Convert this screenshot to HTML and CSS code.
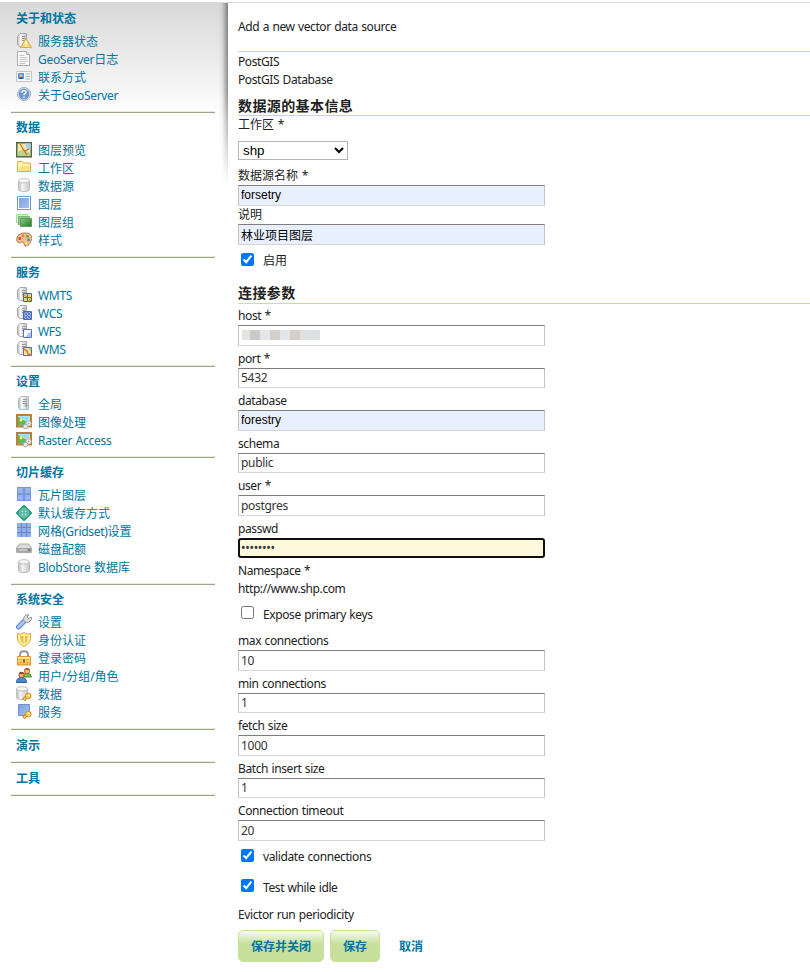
FILE: index.html
```html
<!DOCTYPE html>
<html lang="zh-CN">
<head>
  <meta charset="UTF-8" />
  <meta name="viewport" content="width=device-width, initial-scale=1.0"/>
  <title>GeoServer</title>
  <link rel="stylesheet" href="styles.css">
</head>
<body>
  <svg class="icon-defs" width="0" height="0">
    <defs>
      <linearGradient id="metal" x1="0" x2="1"><stop offset="0" stop-color="#bbb"/><stop offset=".35" stop-color="#f4f4f4"/><stop offset="1" stop-color="#c5c5c5"/></linearGradient>
      <linearGradient id="blue" x1="0" y1="0" x2="1" y2="1"><stop offset="0" stop-color="#7b9fdc"/><stop offset="1" stop-color="#a9c3ef"/></linearGradient>
      <linearGradient id="green" x1="0" y1="0" x2="1" y2="1"><stop offset="0" stop-color="#8cc98a"/><stop offset="1" stop-color="#237a27"/></linearGradient>
      <linearGradient id="gold" x1="0" y1="0" x2="0" y2="1"><stop offset="0" stop-color="#fff0a0"/><stop offset="1" stop-color="#f0b73c"/></linearGradient>
    </defs>
    <symbol id="server" viewBox="0 0 16 16">
      <path d="M1.500 3.500 4 .500h6.500v13H4L1.500 11.500z" fill="url(#metal)" stroke="#aaa"/>
      <path d="M4.500 1v12" stroke="#fff"/>
      <path d="M6 3.500h3.500M6 5.500h3.500M6 7.500h3.500" stroke="#999"/>
    </symbol>
    <symbol id="cylinder" viewBox="0 0 16 16">
      <path d="M2.500 3v8.500c0 1.200 2.200 2 5.500 2s5.500-.8 5.500-2V3" fill="url(#metal)" stroke="#bdbdbd"/>
      <ellipse cx="8" cy="2.800" rx="5.500" ry="2.200" fill="#f6f6f6" stroke="#c4c4c4"/>
    </symbol>
    <symbol id="key" viewBox="0 0 16 16">
      <path d="M12 9.500 7.500 14" stroke="#c8811c" stroke-width="3.400"/>
      <path d="M12 9.500 8 13.500" stroke="#ffd96b" stroke-width="1.600"/>
      <circle cx="12.300" cy="10" r="2.800" fill="#ffd35e" stroke="#cf8a22"/>
      <circle cx="13" cy="9.500" r=".8" fill="#fff"/>
    </symbol>
    <symbol id="picture" viewBox="0 0 16 16">
      <path d="M1 1h14v11.500H1z" fill="#a9e3f5" stroke="#b98038" stroke-width="2"/>
      <path d="m2 3 9 5v3.500H2z" fill="#5dbb52"/>
      <path d="M4 3h8v4z" fill="#8fdcf0"/>
      <circle cx="5" cy="6" r="1.400" fill="#fff07a"/>
      <circle cx="12.500" cy="9.500" r="2.600" fill="#eee" stroke="#bbb"/>
      <circle cx="9.500" cy="12.500" r="2.300" fill="#e8e8e8" stroke="#aaa"/>
      <circle cx="12.500" cy="9.500" r=".8" fill="#999"/>
    </symbol>
  </svg>

  <div class="page">
    <div class="sidebar">
      <div class="nav-block">
        <h3>关于和状态</h3>
        <ul>
          <li><svg class="icon" viewBox="0 0 16 16"><use href="#server"/><path d="M10 5.500 15.500 14.500h-11z" fill="#ffd978" stroke="#dfa545" stroke-linejoin="round"/><path d="M10 8v3.200M10 12.300v1.200" stroke="#fff" stroke-width="1.600"/></svg><a href="#">服务器状态</a></li>
          <li><svg class="icon" viewBox="0 0 16 16"><path d="M1.500.5h9l3 3v11h-12z" fill="#fbfbfb" stroke="#aaa"/><path d="M10.500.5v3h3" fill="#ddd" stroke="#aaa"/><path d="M3.500 4.500h5M3.500 6.500h8M3.500 8.500h8M3.500 10.500h8M3.500 12.500h6" stroke="#c4c4c4"/></svg><a href="#" class="en">GeoServer<span>日志</span></a></li>
          <li><svg class="icon" viewBox="0 0 16 16"><path d="M.5 2.500h15v10H.5z" fill="#fafafa" stroke="#c5c5c5"/><path d="M2 4h6v6H2z" fill="#5a96dc"/><circle cx="5" cy="6.500" r="1.500" fill="#f1b176"/><path d="M3 10q2-4 4 0" fill="#25559d"/><path d="M9.500 5h4.500M9.500 7.500h4.500M9.500 10h4.500" stroke="#9bb0c8"/></svg><a href="#">联系方式</a></li>
          <li><svg class="icon" viewBox="0 0 16 16"><circle cx="8" cy="7" r="6.500" fill="#c9d7eb" stroke="#9cb1cc"/><circle cx="8" cy="7" r="5.200" fill="#6d96cc"/><path d="M6 5.700c0-3 4-2.700 4-.5 0 1.500-2 1.400-2 3M8 9.500V11" fill="none" stroke="#fff" stroke-width="1.400"/></svg><a href="#" class="en"><span>关于</span>GeoServer</a></li>
        </ul>
      </div>

      <div class="nav-block">
        <h3>数据</h3>
        <ul>
          <li><svg class="icon" viewBox="0 0 16 16"><path d="M.75.75h14.500v14H.75z" fill="#f1eea0" stroke="#556549" stroke-width="1.500"/><path d="M9 1.500h5.500V8L11 7z" fill="#a8cff2"/><path d="M2 10 7 7l7 4v3H2z" fill="#b7d985"/><path d="m4 2 7 11M9 9l4-2" stroke="#e16042" stroke-width="1.300"/></svg><a href="#">图层预览</a></li>
          <li><svg class="icon" viewBox="0 0 16 16"><path d="M1.500 11.500v-10h5l1 1.500h7v8.500z" fill="#fff2b0" stroke="#e2ae43"/><path d="M2.500 11 4 7.500 7 6h7v5z" fill="#ffe07d"/></svg><a href="#">工作区</a></li>
          <li><svg class="icon" viewBox="0 0 16 16"><use href="#cylinder"/></svg><a href="#">数据源</a></li>
          <li><svg class="icon" viewBox="0 0 16 16"><path d="M1.500.5h13v13h-13z" fill="#fff" stroke="#6f94d0"/><path d="M3 2h10v10H3z" fill="url(#blue)"/></svg><a href="#">图层</a></li>
          <li><svg class="icon" viewBox="0 0 16 16"><path d="M.5.500h11v8H.5z" fill="#d9eed7" stroke="#a9d4a6"/><path d="M2.500 2.500h11v8h-11z" fill="#8fc88d" stroke="#73b772"/><path d="M4.500 4.500h11v8h-11z" fill="url(#green)" stroke="#5a9d5b"/></svg><a href="#">图层组</a></li>
          <li><svg class="icon" viewBox="0 0 16 16"><path d="M1 9C-.5 3 5 .8 10 1c5 .2 7 4 5 8-1.500 4-4 5.500-6 5-2-.6.500-3-2-4-2-.8-4 3-6-1z" fill="#efc08c" stroke="#b87843"/><circle cx="3.700" cy="6.500" r="1.500" fill="#d94b36"/><circle cx="7" cy="4" r="1.400" fill="#e77b54"/><circle cx="11.500" cy="4.300" r="1.500" fill="#5bad52"/><circle cx="12.500" cy="8" r="1.400" fill="#368ccc"/><circle cx="10" cy="11" r="1.300" fill="#f5df5d"/></svg><a href="#">样式</a></li>
        </ul>
      </div>

      <div class="nav-block">
        <h3>服务</h3>
        <ul>
          <li><svg class="icon" viewBox="0 0 16 16"><use href="#server"/><path d="M7.500 6.500h8v8h-8z" fill="#f4d36c" stroke="#4e6396"/><path d="M11.500 7v7M8 10.500h7" stroke="#4e6396"/><path d="m8.500 8 2 2M13 12l2 2" stroke="#e45c39"/></svg><a href="#" class="en">WMTS</a></li>
          <li><svg class="icon" viewBox="0 0 16 16"><use href="#server"/><path d="M7.500 6.500h8v8h-8z" fill="#aac4ef" stroke="#5069b0"/><path d="m8 7 7 7M8 10.500l3.500 3.500M11.500 7l3.500 3.500M15 7l-7 7M11.500 7 8 10.500M15 10.500 11.500 14" stroke="#4665b5"/></svg><a href="#" class="en">WCS</a></li>
          <li><svg class="icon" viewBox="0 0 16 16"><use href="#server"/><path d="M7.500 6.500h8v8h-8z" fill="#fff" stroke="#5b72b0"/><path d="M8.500 14q3-1 3-3.500 2 0 3.500-2V14z" fill="#a8c7f3"/></svg><a href="#" class="en">WFS</a></li>
          <li><svg class="icon" viewBox="0 0 16 16"><use href="#server"/><path d="M7.500 6.500h8v8h-8z" fill="#f0e88b" stroke="#6b68a4"/><path d="M12 7h3v4z" fill="#a6d48a"/><path d="m8 8 3 2 1 3 3 1" fill="none" stroke="#e46b3e" stroke-width="1.500"/></svg><a href="#" class="en">WMS</a></li>
        </ul>
      </div>

      <div class="nav-block">
        <h3>设置</h3>
        <ul>
          <li><svg class="icon" viewBox="0 0 16 16"><path d="M2.500 3 5 .500h7.500v13H5L2.500 12z" fill="url(#metal)" stroke="#bbb"/><path d="M6 1v12" stroke="#fff"/><path d="M7 3.500h4M7 5.500h4M7 7.500h4" stroke="#999"/><path d="M9.500 9.500H11" stroke="#45ad4e" stroke-width="2"/></svg><a href="#">全局</a></li>
          <li><svg class="icon" viewBox="0 0 16 16"><use href="#picture"/></svg><a href="#">图像处理</a></li>
          <li><svg class="icon" viewBox="0 0 16 16"><use href="#picture"/></svg><a href="#" class="en">Raster Access</a></li>
        </ul>
      </div>

      <div class="nav-block">
        <h3>切片缓存</h3>
        <ul>
          <li><svg class="icon" viewBox="0 0 16 16"><path d="M1 0h14v14H1z" fill="#7397d7"/><path d="M2 1h5v5H2zM9 1h5v5H9zM2 8h5v5H2zM9 8h5v5H9z" fill="#98b5e7"/></svg><a href="#">瓦片图层</a></li>
          <li><svg class="icon" viewBox="0 0 16 16"><path d="M8 .5 15.500 8 8 15.500.5 8z" fill="#46b79c" stroke="#27977d" stroke-width="1.500" stroke-linejoin="round"/><circle cx="8" cy="8" r="4.500" fill="#b9efd9"/><path d="M8 2v12M2 8h12M5 5v6M11 5v6M5 5h6M5 11h6" stroke="#3ba68c"/></svg><a href="#">默认缓存方式</a></li>
          <li><svg class="icon" viewBox="0 0 16 16"><path d="M1 0h14v14H1z" fill="#92b0e6"/><path d="M5.500 0v14M10.500 0v14M1 4.500h14M1 9.500h14" stroke="#6287ce"/></svg><a href="#" class="en"><span>网格</span>(Gridset)<span>设置</span></a></li>
          <li><svg class="icon" viewBox="0 0 16 16"><path d="m.5 7 3-4h9l3 4v4.500H.5z" fill="#ddd" stroke="#aaa"/><path d="M1 7h14v4H1z" fill="#a6a6a6"/><path d="M3 9h8" stroke="#e5e5e5"/><path d="M12 9h2" stroke="#555"/></svg><a href="#">磁盘配额</a></li>
          <li><svg class="icon" viewBox="0 0 16 16"><use href="#cylinder"/></svg><a href="#" class="en">BlobStore <span>数据库</span></a></li>
        </ul>
      </div>

      <div class="nav-block">
        <h3>系统安全</h3>
        <ul>
          <li><svg class="icon" viewBox="0 0 16 16"><path d="m2.500 13 6-6" stroke="#6086c5" stroke-width="5" stroke-linecap="round"/><path d="m2.500 13 6-6" stroke="#a8c4ef" stroke-width="3" stroke-linecap="round"/><path d="m8 7-.5-3L10 .8l3 .2-2 2 1.500 1.700L15.300 3l.2 2.500L13 8l-3 .5z" fill="#ddd" stroke="#969696"/></svg><a href="#">设置</a></li>
          <li><svg class="icon" viewBox="0 0 16 16"><path d="M1.500 1.500 4.500 2 8 .5 11.500 2l3-.5c1 7-2 11-6.500 13-4.500-2-7.500-6-6.500-13z" fill="#fff2a0" stroke="#d9a634"/><path d="M4 4h3.500v8Q4 9 4 4zM9 4h3q0 5-3 8z" fill="#eec04a"/></svg><a href="#">身份认证</a></li>
          <li><svg class="icon" viewBox="0 0 16 16"><path d="M4 7V4.500c0-4.500 8-4.500 8 0V7" fill="none" stroke="#999" stroke-width="2"/><path d="M1.500 6.500h13v8.500h-13z" fill="url(#gold)" stroke="#d99832"/><path d="M3 9.500h3M3 12.500h3M10 9.500h3M10 12.500h3" stroke="#e0a347"/><path d="M8 9v3.500" stroke="#754815" stroke-width="1.500"/></svg><a href="#">登录密码</a></li>
          <li><svg class="icon" viewBox="0 0 16 16"><path d="M7 9q0-4 4-4t4.500 4z" fill="#76bb55" stroke="#4d9336"/><circle cx="11" cy="3" r="2.600" fill="#f5bd83" stroke="#b36933"/><path d="M8.500 2q0-2 2.500-2t2.700 2z" fill="#a95d27"/><path d="M.5 14.500q0-5 5-5t5 5z" fill="#4b89d0" stroke="#2a61a1"/><circle cx="5.500" cy="7" r="2.600" fill="#f3b376" stroke="#a55328"/><path d="M3 6q0-2.300 2.500-2.300T8 6z" fill="#9d4223"/></svg><a href="#" class="en"><span>用户</span>/<span>分组</span>/<span>角色</span></a></li>
          <li><svg class="icon" viewBox="0 0 16 16"><g transform="translate(-2 0)"><use href="#cylinder"/></g><use href="#key"/></svg><a href="#">数据</a></li>
          <li><svg class="icon" viewBox="0 0 16 16"><path d="M2.500.5h11v11h-11z" fill="url(#blue)" stroke="#7092cc"/><use href="#key"/></svg><a href="#">服务</a></li>
        </ul>
      </div>

      <div class="nav-block single"><h3>演示</h3></div>
      <div class="nav-block single"><h3>工具</h3></div>
    </div>

    <div class="main">
      <form>
        <p class="description">Add a new vector data source</p>
        <div class="store-type">
          <p>PostGIS</p>
          <p>PostGIS Database</p>
        </div>

        <h4>数据源的基本信息</h4>
        <div class="workspace">
          <label for="workspace" class="zh">工作区 *</label>
          <select id="workspace"><option>shp</option></select>
        </div>
        <div class="basic">
          <label for="name" class="zh">数据源名称 *</label>
          <input type="text" id="name" class="autofill" value="forsetry">
          <label for="desc" class="zh">说明</label>
          <input type="text" id="desc" class="autofill" value="林业项目图层">
        </div>
        <div class="check enabled"><input type="checkbox" id="enabled" checked><label for="enabled" class="zh">启用</label></div>

        <h4 class="params-title">连接参数</h4>
        <div class="field">
          <label>host *</label>
          <div class="host-box"><div class="mask"><i></i><i></i><i></i><i></i><i></i><i></i><i></i><i></i></div></div>
        </div>
        <div class="field"><label for="port">port *</label><input type="text" id="port" value="5432"></div>
        <div class="field"><label for="database">database</label><input type="text" id="database" class="autofill" value="forestry"></div>
        <div class="field"><label for="schema">schema</label><input type="text" id="schema" value="public"></div>
        <div class="field"><label for="user">user *</label><input type="text" id="user" value="postgres"></div>
        <div class="field"><label for="passwd">passwd</label><input type="password" id="passwd" class="focused" value="geoserve"></div>
        <div class="namespace">
          <p>Namespace *</p>
          <p class="url">http://www.shp.com</p>
        </div>
        <div class="check expose"><input type="checkbox" id="expose"><label for="expose">Expose primary keys</label></div>
        <div class="field"><label for="max">max connections</label><input type="text" id="max" value="10"></div>
        <div class="field"><label for="min">min connections</label><input type="text" id="min" value="1"></div>
        <div class="field"><label for="fetch">fetch size</label><input type="text" id="fetch" value="1000"></div>
        <div class="field"><label for="batch">Batch insert size</label><input type="text" id="batch" value="1"></div>
        <div class="field"><label for="timeout">Connection timeout</label><input type="text" id="timeout" value="20"></div>
        <div class="check validate"><input type="checkbox" id="validate" checked><label for="validate">validate connections</label></div>
        <div class="check idle"><input type="checkbox" id="idle" checked><label for="idle">Test while idle</label></div>
        <p class="evictor">Evictor run periodicity</p>
      </form>
      <div class="buttons">
        <a href="#" class="btn">保存并关闭</a>
        <a href="#" class="btn">保存</a>
        <a href="#" class="cancel">取消</a>
      </div>
    </div>
  </div>
</body>
</html>
```
FILE: styles.css
```css
* {
  box-sizing: border-box;
}
body {
  margin: 0;
  padding-top: 2px;
  height: 972px;
  overflow: hidden;
  background: #fff;
  color: #222;
  font: 12px/18px "Noto Sans", "Noto Sans CJK SC", sans-serif;
  letter-spacing: -0.4px;
  word-spacing: 0.7px;
}
h3, h4, p, ul, form {
  margin: 0;
  padding: 0;
}
a {
  color: #0076a1;
  text-decoration: none;
}
.icon-defs {
  display: block;
}
.page {
  display: flex;
  border-top: 1px solid #d9d9d9;
}

/* left menu */
.sidebar {
  width: 228px;
  flex: none;
  padding: 1px 13px 0 11px;
  background:
    linear-gradient(to bottom, transparent 90px, #fff 182px) right top / 14px 182px no-repeat,
    linear-gradient(to right, transparent, rgba(0,0,0,.05) 40%, rgba(0,0,0,.42)) right top / 10px 182px no-repeat,
    linear-gradient(#d8d8d8, #fff 112px);
}
.nav-block {
  padding: 6px 5px 8px;
  border-bottom: 1px solid #9aa489;
  box-shadow: inset 0 -1px #e9eedb;
}
.nav-block.single {
  padding: 7px 5px;
}
.nav-block h3 {
  font-size: 12px;
  line-height: 18px;
  font-weight: bold;
  color: #0076a1;
  letter-spacing: 0;
}
.nav-block ul {
  list-style: none;
  padding-top: 5px;
  margin-bottom: -1px;
}
.nav-block li {
  display: flex;
  gap: 6px;
  height: 18px;
}
.nav-block li a {
  letter-spacing: 0;
  white-space: nowrap;
}
.nav-block li a.en {
  letter-spacing: -0.3px;
}
.nav-block li a.en span {
  letter-spacing: 0;
}
.icon {
  width: 16px;
  height: 16px;
  flex: none;
}

/* form */
.main {
  flex: 1;
  padding-left: 10px;
}
form {
  height: 922px;
}
.description {
  padding: 15px 0;
  height: 48px;
}
.store-type {
  border-top: 1px solid #c6e09b;
  padding-top: 1px;
  height: 46px;
}
h4 {
  height: 19px;
  border-bottom: 1px solid #c6e09b;
  font-size: 14px;
  line-height: 18px;
  letter-spacing: 0.4px;
}
label {
  display: block;
}
label.zh {
  letter-spacing: 0;
}
.workspace {
  height: 50px;
}
select {
  display: block;
  width: 110px;
  height: 19px;
  margin-top: 7px;
  padding: 0;
  border: 1px solid #b5b5b5;
  border-radius: 0;
  background: #fff;
  color: #000;
  font: 13.333px "Liberation Sans", sans-serif;
}
input[type="text"], input[type="password"], .host-box {
  display: block;
  width: 307px;
  height: 20.5px;
  padding: 0 2px;
  border: 1px solid #c3c3c3;
  border-top-color: #7d7d7d;
  border-bottom-color: #d5d5d5;
  outline: none;
  background: #fff;
  color: #333;
  font: 12px "Noto Sans", "Noto Sans CJK SC", sans-serif;
  letter-spacing: -0.3px;
}
input[type="text"].autofill {
  background: #e8f0fe;
  color: #000;
  font-family: "Liberation Sans", "Noto Sans CJK SC", sans-serif;
  letter-spacing: 0;
}
input[type="password"].focused {
  border: 2px solid #101010;
  border-radius: 3px;
  padding: 0 1px;
  background: #fdf7db;
}
.basic {
  height: 79px;
}
.basic label {
  height: 19px;
  padding-top: 1px;
}
.basic input[type="text"] {
  height: 21px;
  padding-bottom: 1px;
}
.basic input + label {
  height: 18px;
  padding-top: 0;
}
.check {
  display: flex;
}
.check input {
  width: 13px;
  height: 13px;
  margin: 0 9px 0 3px;
}
.enabled {
  height: 40px;
  padding-top: 7px;
}
.enabled input {
  margin-top: 1px;
}
.params-title {
  line-height: 16px;
  margin-bottom: 2px;
}
.field {
  height: 42.5px;
}
.field label {
  height: 19px;
  padding-top: 1px;
}
.host-box {
  padding: 4px 3px;
}
.mask {
  display: flex;
  height: 10px;
}
.mask i {
  width: 10px;
  background: #e4e6eb;
}
.mask i:nth-child(1) { width: 8px; background: #e5e4df; }
.mask i:nth-child(2) { background: #cacaca; }
.mask i:nth-child(4) { background: #d6d0cd; }
.mask i:nth-child(6) { background: #d5cfcc; }
.mask i:nth-child(7) { background: #e0e0e0; }
.mask i:nth-child(8) { background: #dbe0e2; }
.namespace {
  padding-top: 1px;
  height: 37px;
}
.expose {
  height: 33px;
  padding-top: 8px;
}
.validate {
  height: 35px;
  padding-top: 4px;
}
.validate input {
  margin-top: 1px;
}
.idle {
  height: 27px;
}
.buttons {
  display: flex;
  gap: 6px;
  margin-top: 5px;
}
.btn, .cancel {
  height: 32px;
  padding: 0 12px;
  border: 1px solid #c6e09b;
  border-radius: 5px;
  background: linear-gradient(#f5faec, #c6e09b 45%);
  font-weight: bold;
  line-height: 31px;
  letter-spacing: 0;
}
.cancel {
  border-color: transparent;
  background: none;
}
```
